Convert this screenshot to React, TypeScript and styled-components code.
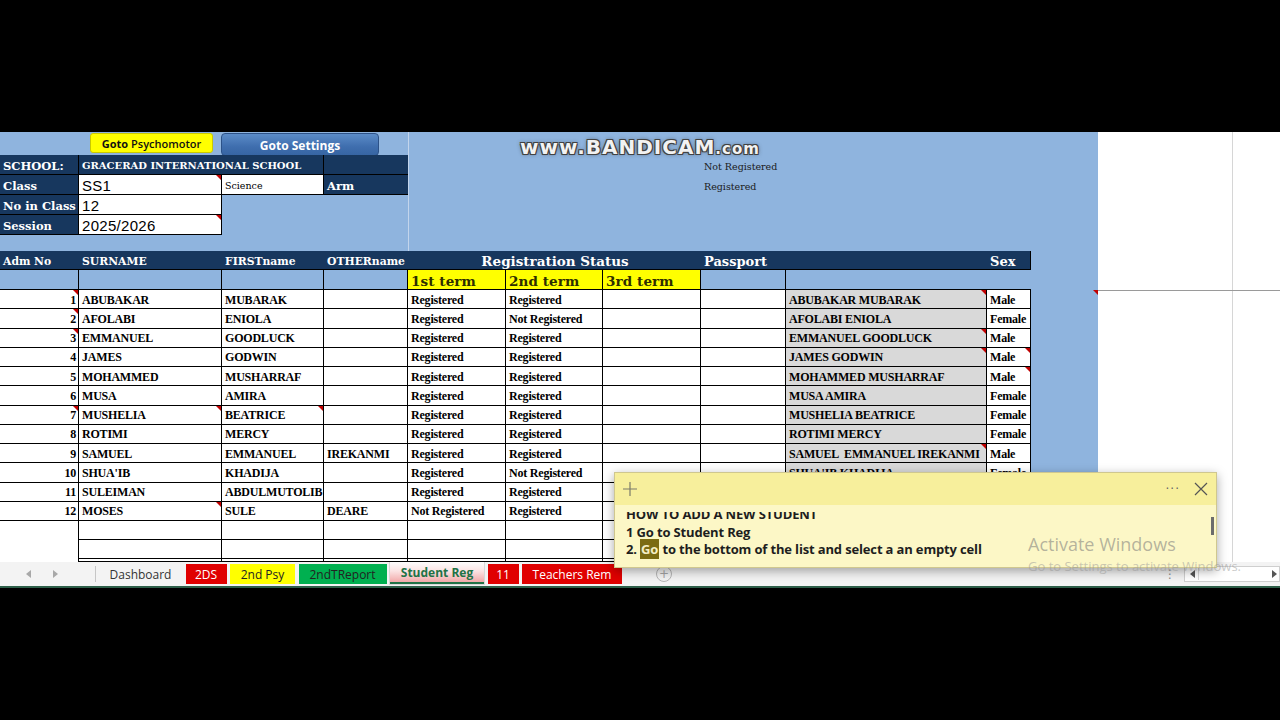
import React from 'react';
import styled, { createGlobalStyle, css } from 'styled-components';

const NAVY = '#17375e';
const SKY = '#8fb4de';

const GlobalStyle = createGlobalStyle`
  html, body { margin: 0; padding: 0; background: #000; }
  #root { width: 1280px; height: 720px; }
`;

type Student = {
  n: number;
  s: string;
  f: string;
  o: string;
  t1: string;
  t2: string;
  full: string;
  sex: string;
  marks?: string;
};

const REG = 'Registered';
const NOT = 'Not Registered';

const students: Student[] = [
  { n: 1, s: 'ABUBAKAR', f: 'MUBARAK', o: '', t1: REG, t2: REG, full: 'ABUBAKAR MUBARAK', sex: 'Male', marks: 'aik' },
  { n: 2, s: 'AFOLABI', f: 'ENIOLA', o: '', t1: REG, t2: NOT, full: 'AFOLABI ENIOLA', sex: 'Female', marks: 'a' },
  { n: 3, s: 'EMMANUEL', f: 'GOODLUCK', o: '', t1: REG, t2: REG, full: 'EMMANUEL GOODLUCK', sex: 'Male', marks: 'ai' },
  { n: 4, s: 'JAMES', f: 'GODWIN', o: '', t1: REG, t2: REG, full: 'JAMES GODWIN', sex: 'Male', marks: 'ij' },
  { n: 5, s: 'MOHAMMED', f: 'MUSHARRAF', o: '', t1: REG, t2: REG, full: 'MOHAMMED MUSHARRAF', sex: 'Male', marks: 'j' },
  { n: 6, s: 'MUSA', f: 'AMIRA', o: '', t1: REG, t2: REG, full: 'MUSA AMIRA', sex: 'Female' },
  { n: 7, s: 'MUSHELIA', f: 'BEATRICE', o: '', t1: REG, t2: REG, full: 'MUSHELIA BEATRICE', sex: 'Female', marks: 'abc' },
  { n: 8, s: 'ROTIMI', f: 'MERCY', o: '', t1: REG, t2: REG, full: 'ROTIMI MERCY', sex: 'Female' },
  { n: 9, s: 'SAMUEL', f: 'EMMANUEL', o: 'IREKANMI', t1: REG, t2: REG, full: 'SAMUEL  EMMANUEL IREKANMI', sex: 'Male', marks: 'i' },
  { n: 10, s: "SHUA'IB", f: 'KHADIJA', o: '', t1: REG, t2: NOT, full: "SHUA'IB KHADIJA", sex: 'Female' },
  { n: 11, s: 'SULEIMAN', f: 'ABDULMUTOLIB', o: '', t1: REG, t2: REG, full: 'SULEIMAN ABDULMUTOLIB', sex: 'Male' },
  { n: 12, s: 'MOSES', f: 'SULE', o: 'DEARE', t1: NOT, t2: REG, full: 'MOSES SULE DEARE', sex: 'Male', marks: 'b' },
];

const tabs = [
  { label: 'Dashboard', w: 83, bg: 'transparent', color: '#333' },
  { label: '2DS', w: 41, bg: '#e00000', color: '#fff' },
  { label: '2nd Psy', w: 65, bg: '#ffff00', color: '#222' },
  { label: '2ndTReport', w: 88, bg: '#00b050', color: '#222' },
  { label: 'Student Reg', w: 94, bg: '', color: '#217346', active: true },
  { label: '11', w: 31, bg: '#e00000', color: '#fff' },
  { label: 'Teachers Rem', w: 100, bg: '#e00000', color: '#fff' },
];

const Screen = styled.div`
  position: relative;
  width: 1280px;
  height: 720px;
  padding-top: 132px;
  box-sizing: border-box;
  background: #000;
  overflow: hidden;
`;

const Window = styled.div`
  position: relative;
  width: 1280px;
  height: 456px;
  display: flex;
  flex-direction: column;
  background: #fff;
`;

const SheetArea = styled.div`
  display: flex;
  height: 430px;
`;

const BluePanel = styled.div`
  width: 1098px;
  flex: none;
  background: ${SKY};
  display: flex;
  flex-direction: column;
`;

const OutsidePanel = styled.div`
  flex: 1;
  background:
    linear-gradient(#9a9a9a, #9a9a9a) 0 158px / 100% 1px no-repeat,
    linear-gradient(#d6d6d6, #d6d6d6) 134px 0 / 1px 100% no-repeat,
    #fff;
`;

const Row = styled.div<{ $h: number }>`
  display: flex;
  height: ${p => p.$h}px;
  flex: none;
`;

type CellProps = {
  $w: number;
  $bg?: string;
  $br?: boolean;
  $bb?: boolean;
  $gl?: boolean;
  $align?: 'left' | 'right' | 'center';
  $mark?: boolean;
};

const Cell = styled.div<CellProps>`
  position: relative;
  box-sizing: border-box;
  flex: 0 0 ${p => p.$w}px;
  width: ${p => p.$w}px;
  height: 100%;
  display: flex;
  align-items: center;
  justify-content: ${p =>
    p.$align === 'right' ? 'flex-end' : p.$align === 'center' ? 'center' : 'flex-start'};
  padding: 2px 2px 0 3px;
  background: ${p => p.$bg || 'transparent'};
  border-right: ${p => (p.$br ? '1px solid #000' : 'none')};
  border-bottom: ${p => (p.$bb ? '1px solid #000' : 'none')};
  border-left: ${p => (p.$gl ? '1px solid #c3d5ec' : 'none')};
  white-space: pre;
  color: #000;
  font-family: "Liberation Serif", "Times New Roman", serif;
  font-weight: 700;
  font-size: 12px;
  letter-spacing: -0.2px;
  ${p =>
    p.$mark &&
    css`
      &::after {
        content: '';
        position: absolute;
        top: 0;
        right: 0;
        border-top: 5px solid #c00000;
        border-left: 5px solid transparent;
      }
    `}
`;

const LabelCell = styled(Cell)`
  background: ${NAVY};
  color: #fff;
  font-family: "DejaVu Serif", serif;
  font-size: 11.5px;
  letter-spacing: 0;
`;

const SchoolCell = styled(LabelCell)`
  font-size: 10px;
  padding-left: 3px;
`;

const InputCell = styled(Cell)`
  background: #fff;
  font-family: "Liberation Sans", Arial, sans-serif;
  font-weight: 400;
  font-size: 15px;
  letter-spacing: 0.3px;
`;

const TinyCell = styled(Cell)`
  background: #fff;
  font-family: "DejaVu Serif", serif;
  font-weight: 400;
  font-size: 9.5px;
  letter-spacing: 0;
`;

const LegendCell = styled(Cell)`
  font-family: "DejaVu Serif", serif;
  font-weight: 400;
  font-size: 9.5px;
  color: #1a1a1a;
  letter-spacing: 0;
`;

const HeadCell = styled(Cell)`
  background: ${NAVY};
  color: #fff;
  font-family: "DejaVu Serif", serif;
  font-size: ${p => (p.$align === 'center' ? '13.5px' : '10.8px')};
  letter-spacing: 0;
`;

const BigHeadCell = styled(HeadCell)`
  font-size: 13px;
`;

const TermCell = styled(Cell)`
  background: #ffff00;
  color: #2e2e00;
  font-family: "DejaVu Serif", serif;
  font-size: 13.5px;
  letter-spacing: 0.1px;
`;

const ButtonBar = styled.div`
  width: 408px;
  flex: none;
  box-sizing: border-box;
  display: flex;
  align-items: flex-start;
  gap: 8px;
  padding: 1px 0 0 90px;
`;

const PsychoButton = styled.div`
  width: 123px;
  height: 20px;
  box-sizing: border-box;
  display: flex;
  align-items: center;
  justify-content: center;
  background: #ffff00;
  border: 1px solid #c9c900;
  border-radius: 3px;
  font-family: "Open Sans", sans-serif;
  font-size: 11px;
  font-weight: 600;
  color: #111;
  b { font-weight: 700; margin-right: 3px; }
`;

const SettingsButton = styled.div`
  width: 158px;
  height: 23px;
  box-sizing: border-box;
  display: flex;
  align-items: center;
  justify-content: center;
  padding-top: 2px;
  background: linear-gradient(#5b8cc8, #3f6eae 60%, #3765a3);
  border: 1px solid #2c5288;
  border-radius: 4px;
  font-family: "Open Sans", sans-serif;
  font-size: 12px;
  font-weight: 700;
  color: #fff;
`;

const Watermark = styled.div`
  position: absolute;
  left: 520px;
  top: 3px;
  font-family: "DejaVu Sans", sans-serif;
  font-weight: 700;
  font-size: 20px;
  letter-spacing: 1px;
  color: #f2f2f2;
  text-shadow:
    0 0 1px #333, 1px 1px 0 #444, -1px -1px 0 #444, 1px -1px 0 #444, -1px 1px 0 #444,
    0 0 4px rgba(40, 40, 40, 0.7);
  span { font-size: 15px; }
`;

const TabBar = styled.div`
  height: 24px;
  flex: none;
  display: flex;
  align-items: center;
  background: #f3f3f3;
`;

const StatusEdge = styled.div`
  height: 2px;
  flex: none;
  background: #2d5e48;
`;

const Nav = styled.div`
  width: 96px;
  height: 16px;
  box-sizing: border-box;
  display: flex;
  align-items: center;
  gap: 22px;
  padding-left: 26px;
  border-right: 1px solid #c6c6c6;
  margin-right: 3px;
`;

const Tabs = styled.div`
  display: flex;
  gap: 3.5px;
  height: 100%;
  align-items: center;
`;

const Tab = styled.div<{ $w: number; $bg: string; $color: string; $active?: boolean }>`
  width: ${p => p.$w}px;
  height: 20px;
  box-sizing: border-box;
  display: flex;
  align-items: center;
  justify-content: center;
  background: ${p => p.$bg};
  color: ${p => p.$color};
  font-family: "Open Sans", sans-serif;
  font-size: 12px;
  ${p =>
    p.$active &&
    css`
      height: 22px;
      align-self: flex-start;
      font-weight: 700;
      background: linear-gradient(#fdfdfd, #fbe3e3 45%, #f2a9a9);
      border-bottom: 2px solid #217346;
      box-shadow: 0 0 0 1px #d8d8d8;
    `}
`;

const AddSheet = styled.div`
  width: 14px;
  height: 14px;
  margin-left: 34px;
  border: 1px solid #b5b5b5;
  border-radius: 50%;
  display: flex;
  align-items: center;
  justify-content: center;
  color: #a5a5a5;
  font-family: "DejaVu Sans", sans-serif;
  font-size: 12px;
  line-height: 1;
`;

const RightTools = styled.div`
  margin-left: auto;
  display: flex;
  align-items: center;
  gap: 8px;
  height: 100%;
`;

const Dots = styled.div`
  color: #8a8a8a;
  font-family: "DejaVu Sans", sans-serif;
  font-size: 12px;
`;

const HScroll = styled.div`
  width: 96px;
  height: 16px;
  box-sizing: border-box;
  border: 1px solid #cfcfcf;
  background: #fff;
  display: flex;
  align-items: center;
  justify-content: space-between;
  padding: 0 2px;
`;

const ScrollBtn = styled.div`
  width: 11px;
  height: 12px;
  display: flex;
  align-items: center;
  justify-content: center;
  border-right: 1px solid #d8d8d8;
`;

const Note = styled.div`
  position: absolute;
  left: 614px;
  top: 340px;
  width: 603px;
  height: 96px;
  box-sizing: border-box;
  display: flex;
  flex-direction: column;
  background: #fcf7c6;
  border: 1px solid #cfc78f;
  box-shadow: 0 3px 10px rgba(0, 0, 0, 0.35);
`;

const NoteHeader = styled.div`
  height: 32px;
  flex: none;
  display: flex;
  align-items: center;
  padding: 0 8px 0 7px;
  background: #f7ef9c;
`;

const NoteTools = styled.div`
  margin-left: auto;
  display: flex;
  align-items: center;
  gap: 14px;
`;

const NoteDots = styled.div`
  color: #666;
  font-family: "DejaVu Sans", sans-serif;
  font-size: 12px;
  letter-spacing: 1px;
`;

const NoteBody = styled.div`
  position: relative;
  flex: 1;
  padding: 7px 12px 0 11px;
  display: flex;
`;

const NoteViewport = styled.div`
  height: 52px;
  flex: 1;
  overflow: hidden;
`;

const NoteText = styled.div`
  margin-top: -6px;
  font-family: "Open Sans", sans-serif;
  font-weight: 700;
  font-size: 13px;
  line-height: 17.5px;
  letter-spacing: -0.15px;
  color: #1e1e1e;
  p { margin: 0; }
`;

const Hl = styled.span`
  background: #7b6b12;
  color: #f4eec4;
  padding: 1px 1px;
`;

const NoteThumb = styled.div`
  position: absolute;
  right: 2px;
  top: 12px;
  width: 3px;
  height: 18px;
  background: #6c6c6c;
`;

const Activate = styled.div`
  position: absolute;
  left: 1028px;
  top: 532px;
  font-family: "Open Sans", sans-serif;
  color: rgba(120, 120, 120, 0.55);
  pointer-events: none;
`;

const ActivateTitle = styled.div`
  font-size: 18px;
  line-height: 25px;
`;

const ActivateSub = styled.div`
  font-size: 13px;
  line-height: 18px;
  color: rgba(150, 150, 150, 0.5);
`;

const Arrow = ({ dir, color = '#a8a8a8' }: { dir: 'l' | 'r'; color?: string }) => (
  <svg width="5" height="8" viewBox="0 0 5 8">
    <path d={dir === 'l' ? 'M5 0 L0 4 L5 8 Z' : 'M0 0 L5 4 L0 8 Z'} fill={color} />
  </svg>
);

const DataRow = ({ st }: { st: Student }) => {
  const m = (k: string) => !!st.marks && st.marks.includes(k);
  return (
    <Row $h={19.25}>
      <Cell $w={79} $bg="#fff" $br $bb $align="right" $mark={m('a')}>{st.n}</Cell>
      <Cell $w={143} $bg="#fff" $br $bb $mark={m('b')}>{st.s}</Cell>
      <Cell $w={102} $bg="#fff" $br $bb $mark={m('c')}>{st.f}</Cell>
      <Cell $w={84} $bg="#fff" $br $bb>{st.o}</Cell>
      <Cell $w={98} $bg="#fff" $br $bb>{st.t1}</Cell>
      <Cell $w={97} $bg="#fff" $br $bb>{st.t2}</Cell>
      <Cell $w={98} $bg="#fff" $br $bb />
      <Cell $w={85} $bg="#fff" $br $bb />
      <Cell $w={201} $bg="#d9d9d9" $br $bb $mark={m('i')}>{st.full}</Cell>
      <Cell $w={44} $bg="#fff" $br $bb $mark={m('j')}>{st.sex}</Cell>
      <Cell $w={67} $mark={m('k')} />
    </Row>
  );
};

const BlankRow = ({ h }: { h: number }) => (
  <Row $h={h}>
    <Cell $w={79} $bg="#fff" $br />
    <Cell $w={143} $bg="#fff" $br $bb />
    <Cell $w={102} $bg="#fff" $br $bb />
    <Cell $w={84} $bg="#fff" $br $bb />
    <Cell $w={98} $bg="#fff" $br $bb />
    <Cell $w={97} $bg="#fff" $br $bb />
    <Cell $w={98} $bg="#fff" $br $bb />
    <Cell $w={85} $bg="#fff" $br $bb />
    <Cell $w={201} $bg="#d9d9d9" $br $bb />
    <Cell $w={44} $bg="#fff" $br $bb />
  </Row>
);

export default function App() {
  return (
    <Screen>
      <GlobalStyle />
      <Window>
        <SheetArea>
          <BluePanel>
            <Row $h={23}>
              <ButtonBar>
                <PsychoButton>
                  <b>Goto</b>Psychomotor
                </PsychoButton>
                <SettingsButton>Goto Settings</SettingsButton>
              </ButtonBar>
              <Cell $w={293} $gl />
            </Row>
            <Row $h={20}>
              <LabelCell $w={79} $br $bb>SCHOOL:</LabelCell>
              <SchoolCell $w={245} $br $bb>GRACERAD INTERNATIONAL SCHOOL</SchoolCell>
              <LabelCell $w={84} $bb />
              <Cell $w={293} $gl />
              <LegendCell $w={85}>Not Registered</LegendCell>
            </Row>
            <Row $h={20}>
              <LabelCell $w={79} $br $bb>Class</LabelCell>
              <InputCell $w={143} $br $bb $mark>SS1</InputCell>
              <TinyCell $w={102} $br $bb>Science</TinyCell>
              <LabelCell $w={84} $bb>Arm</LabelCell>
              <Cell $w={293} $gl />
              <LegendCell $w={85}>Registered</LegendCell>
            </Row>
            <Row $h={20}>
              <LabelCell $w={79} $br $bb>No in Class</LabelCell>
              <InputCell $w={143} $br $bb>12</InputCell>
              <Cell $w={186} />
              <Cell $w={293} $gl />
            </Row>
            <Row $h={20}>
              <LabelCell $w={79} $br $bb>Session</LabelCell>
              <InputCell $w={143} $br $bb $mark>2025/2026</InputCell>
              <Cell $w={186} />
              <Cell $w={293} $gl />
            </Row>
            <Row $h={16}>
              <Cell $w={408} />
              <Cell $w={293} $gl />
            </Row>
            <Row $h={19}>
              <HeadCell $w={79} $bb>Adm No</HeadCell>
              <HeadCell $w={143} $bb>SURNAME</HeadCell>
              <HeadCell $w={102} $bb>FIRSTname</HeadCell>
              <HeadCell $w={84} $bb>OTHERname</HeadCell>
              <HeadCell $w={293} $bb $align="center">Registration Status</HeadCell>
              <BigHeadCell $w={85} $bb>Passport</BigHeadCell>
              <HeadCell $w={201} $bb />
              <BigHeadCell $w={44} $br $bb>Sex</BigHeadCell>
            </Row>
            <Row $h={20}>
              <Cell $w={79} $br $bb />
              <Cell $w={143} $br $bb />
              <Cell $w={102} $br $bb />
              <Cell $w={84} $br $bb />
              <TermCell $w={98} $br $bb>1st term</TermCell>
              <TermCell $w={97} $br $bb>2nd term</TermCell>
              <TermCell $w={98} $br $bb>3rd term</TermCell>
              <Cell $w={85} $br $bb />
              <Cell $w={201} $bb />
              <Cell $w={44} $bb />
            </Row>
            {students.map(st => (
              <DataRow key={st.n} st={st} />
            ))}
            <BlankRow h={19} />
            <BlankRow h={19} />
            <BlankRow h={3} />
          </BluePanel>
          <OutsidePanel />
        </SheetArea>
        <TabBar>
          <Nav>
            <Arrow dir="l" />
            <Arrow dir="r" />
          </Nav>
          <Tabs>
            {tabs.map(t => (
              <Tab key={t.label} $w={t.w} $bg={t.bg} $color={t.color} $active={t.active}>
                {t.label}
              </Tab>
            ))}
          </Tabs>
          <AddSheet>+</AddSheet>
          <RightTools>
            <Dots>⋮</Dots>
            <HScroll>
              <ScrollBtn>
                <Arrow dir="l" color="#555" />
              </ScrollBtn>
              <Arrow dir="r" color="#555" />
            </HScroll>
          </RightTools>
        </TabBar>
        <StatusEdge />
        <Watermark>
          www.BANDICAM<span>.com</span>
        </Watermark>
        <Note>
          <NoteHeader>
            <svg width="16" height="16" viewBox="0 0 16 16">
              <path d="M8 1 V15 M1 8 H15" stroke="#7a7a6a" strokeWidth="1.2" fill="none" />
            </svg>
            <NoteTools>
              <NoteDots>···</NoteDots>
              <svg width="14" height="14" viewBox="0 0 14 14">
                <path d="M1 1 L13 13 M13 1 L1 13" stroke="#555" strokeWidth="1.2" fill="none" />
              </svg>
            </NoteTools>
          </NoteHeader>
          <NoteBody>
            <NoteViewport>
              <NoteText>
                <p>HOW TO ADD A NEW STUDENT</p>
                <p>1 Go to Student Reg</p>
                <p>
                  2. <Hl>Go</Hl> to the bottom of the list and select a an empty cell
                </p>
              </NoteText>
            </NoteViewport>
            <NoteThumb />
          </NoteBody>
        </Note>
      </Window>
      <Activate>
        <ActivateTitle>Activate Windows</ActivateTitle>
        <ActivateSub>Go to Settings to activate Windows.</ActivateSub>
      </Activate>
    </Screen>
  );
}
